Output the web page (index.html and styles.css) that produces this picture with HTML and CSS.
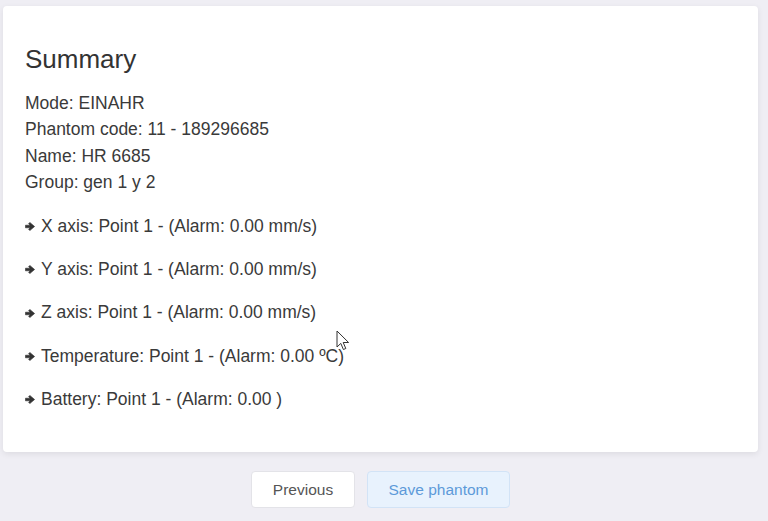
FILE: index.html
```html
<!DOCTYPE html>
<html>
<head>
<meta charset="utf-8">
<link rel="stylesheet" href="styles.css">
</head>
<body>
<div class="page">
  <div class="card">
    <h2 class="title">Summary</h2>
    <div class="info">
      <div>Mode: EINAHR</div>
      <div>Phantom code: 11 - 189296685</div>
      <div>Name: HR 6685</div>
      <div>Group: gen 1 y 2</div>
    </div>
    <p class="row"><svg class="arrow" viewBox="0 0 10 9"><path d="M0.5 3.2h4.6L3.6 1.7 4.8 0.4 9.6 4.5 4.8 8.6 3.6 7.3 5.1 5.8H0.5z" fill="#333" stroke="#333" stroke-width="0.6" stroke-linejoin="round"/></svg>X axis: Point 1 - (Alarm: 0.00 mm/s)</p>
    <p class="row"><svg class="arrow" viewBox="0 0 10 9"><path d="M0.5 3.2h4.6L3.6 1.7 4.8 0.4 9.6 4.5 4.8 8.6 3.6 7.3 5.1 5.8H0.5z" fill="#333" stroke="#333" stroke-width="0.6" stroke-linejoin="round"/></svg>Y axis: Point 1 - (Alarm: 0.00 mm/s)</p>
    <p class="row"><svg class="arrow" viewBox="0 0 10 9"><path d="M0.5 3.2h4.6L3.6 1.7 4.8 0.4 9.6 4.5 4.8 8.6 3.6 7.3 5.1 5.8H0.5z" fill="#333" stroke="#333" stroke-width="0.6" stroke-linejoin="round"/></svg>Z axis: Point 1 - (Alarm: 0.00 mm/s)</p>
    <p class="row"><svg class="arrow" viewBox="0 0 10 9"><path d="M0.5 3.2h4.6L3.6 1.7 4.8 0.4 9.6 4.5 4.8 8.6 3.6 7.3 5.1 5.8H0.5z" fill="#333" stroke="#333" stroke-width="0.6" stroke-linejoin="round"/></svg>Temperature: Point 1 - (Alarm: 0.00 ºC)</p>
    <p class="row"><svg class="arrow" viewBox="0 0 10 9"><path d="M0.5 3.2h4.6L3.6 1.7 4.8 0.4 9.6 4.5 4.8 8.6 3.6 7.3 5.1 5.8H0.5z" fill="#333" stroke="#333" stroke-width="0.6" stroke-linejoin="round"/></svg>Battery: Point 1 - (Alarm: 0.00 )</p>
  </div>
  <div class="actions">
    <button class="btn btn-prev">Previous</button>
    <button class="btn btn-save">Save phantom</button>
  </div>
  <svg class="cursor" width="14" height="22" viewBox="0 0 14 22"><path d="M1 1v16l3.8-3.6 2.6 6.1 2.4-1-2.6-6H12.6z" fill="#fff" stroke="#333" stroke-width="1"/></svg>
</div>
</body>
</html>
```

FILE: styles.css
```css
html, body {
  margin: 0;
  padding: 0;
  background: #efeef4;
  height: 100%;
  overflow: hidden;
}
body {
  font-family: "Liberation Sans", Arial, sans-serif;
  color: #3a3a3a;
}
.page {
  position: relative;
  padding: 6px 10px 0 3px;
}
.card {
  background: #fff;
  border-radius: 4px;
  box-shadow: 0 2px 6px rgba(0, 0, 0, 0.08);
  padding: 38px 22px 22px;
  height: 386px;
}
.title {
  margin: 0 0 16px;
  font-size: 26px;
  font-weight: normal;
  line-height: 30px;
  color: #333;
}
.info {
  font-size: 17.5px;
  line-height: 26.4px;
}
.row {
  margin: 17px 0 0;
  font-size: 17.5px;
  line-height: 26.4px;
  display: flex;
  align-items: center;
}
.arrow {
  width: 10px;
  height: 9px;
  margin-right: 6px;
  margin-top: 1px;
}
.actions {
  display: flex;
  justify-content: center;
  gap: 12px;
  margin-top: 19px;
}
.btn {
  font-family: "Liberation Sans", Arial, sans-serif;
  font-size: 15.5px;
  height: 37px;
  border-radius: 4px;
  padding: 0 20px;
  cursor: pointer;
}
.btn-prev {
  width: 104px;
  background: #fff;
  border: 1px solid #e3e3e8;
  color: #555;
}
.btn-save {
  width: 143px;
  background: #e8f2fd;
  border: 1px solid #d2e3f6;
  color: #5d9ad9;
}
.cursor {
  position: absolute;
  left: 336px;
  top: 330px;
}
```
